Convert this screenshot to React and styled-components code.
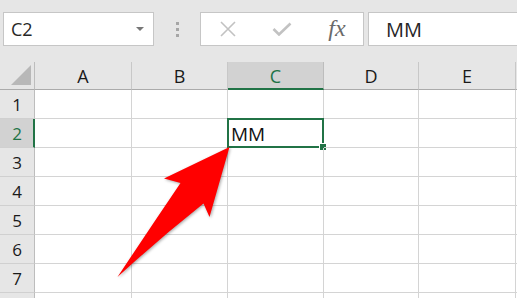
import React from "react";
import styled, { createGlobalStyle } from "styled-components";

const Global = createGlobalStyle`
  html, body { margin: 0; padding: 0; background: #fff; }
  body { width: 517px; height: 298px; overflow: hidden; font-family: "Open Sans", "Noto Sans", sans-serif; }
`;

const Page = styled.div`
  position: relative;
  width: 517px;
  height: 298px;
  overflow: hidden;
  background: #fff;
`;

const Toolbar = styled.div`
  height: 62px;
  box-sizing: border-box;
  background: #e6e6e6;
  display: flex;
  align-items: flex-start;
  padding: 12px 0 0 3px;
`;

const Box = styled.div`
  height: 34px;
  box-sizing: border-box;
  background: #fff;
  border: 1px solid #c6c6c6;
  display: flex;
  align-items: center;
`;

const NameBox = styled(Box)`
  width: 151px;
  padding: 0 0 0 7px;
  justify-content: space-between;
  font-size: 18px;
  color: #262626;
`;

const Caret = styled.span`
  width: 0;
  height: 0;
  border-left: 4px solid transparent;
  border-right: 4px solid transparent;
  border-top: 4px solid #777;
  margin-right: 9px;
`;

const Dots = styled.div`
  width: 46px;
  height: 34px;
  display: flex;
  flex-direction: column;
  align-items: center;
  justify-content: center;
  gap: 3px;
  span {
    width: 3px;
    height: 3px;
    background: #a6a6a6;
  }
`;

const Buttons = styled(Box)`
  width: 164px;
  justify-content: flex-start;
`;

const IconCell = styled.div`
  width: ${p => p.w}px;
  display: flex;
  justify-content: center;
  align-items: center;
`;

const Fx = styled.span`
  font-family: "Liberation Serif", "DejaVu Serif", serif;
  font-style: italic;
  font-size: 24px;
  line-height: 1;
  color: #6a6a6a;
  margin-top: -2px;
  margin-left: 2px;
`;

const FormulaInput = styled(Box)`
  flex: 1;
  margin-left: 4px;
  border-right: none;
  padding-left: 17px;
  font-size: 20px;
  color: #262626;
`;

const Grid = styled.div`
  display: grid;
  grid-template-columns: 35px 97px 96px 96px 95px 97px 1fr;
  grid-auto-rows: 29px;
  grid-template-rows: 28px;
`;

const Corner = styled.div`
  background: #e6e6e6;
  border-right: 1px solid #bdbdbd;
  border-bottom: 1px solid #ababab;
  box-sizing: border-box;
  position: relative;
  svg { position: absolute; right: 3px; bottom: 4px; }
`;

const ColHead = styled.div`
  box-sizing: border-box;
  background: ${p => (p.sel ? "#d2d2d2" : "#e6e6e6")};
  border-right: 1px solid ${p => (p.sel ? "#bdbdbd" : "#c8c8c8")};
  border-bottom: ${p => (p.sel ? "2px solid #217346" : "1px solid #ababab")};
  color: ${p => (p.sel ? "#217346" : "#1a1a1a")};
  display: flex;
  align-items: center;
  justify-content: center;
  font-size: 18px;
  padding-top: ${p => (p.sel ? "1px" : "0")};
`;

const RowHead = styled.div`
  box-sizing: border-box;
  background: ${p => (p.sel ? "#d2d2d2" : "#e6e6e6")};
  border-right: ${p => (p.sel ? "2px solid #217346" : "1px solid #bdbdbd")};
  border-bottom: 1px solid #d0d0d0;
  color: ${p => (p.sel ? "#217346" : "#1a1a1a")};
  display: flex;
  align-items: center;
  justify-content: center;
  font-size: 17px;
  padding-left: ${p => (p.sel ? "1px" : "0")};
`;

const Cell = styled.div`
  box-sizing: border-box;
  border-right: 1px solid #d4d4d4;
  border-bottom: 1px solid #d4d4d4;
  position: relative;
  font-size: 19px;
  color: #111;
  display: flex;
  align-items: center;
  padding-left: 3px;
  padding-top: 2px;
`;

const Selection = styled.div`
  position: absolute;
  left: -1px;
  top: -1px;
  right: -1px;
  bottom: -1px;
  border: 2px solid #217346;
  pointer-events: none;
`;

const Handle = styled.div`
  position: absolute;
  right: -4px;
  bottom: -4px;
  width: 6px;
  height: 6px;
  background: #217346;
  border: 1px solid #fff;
`;

const ArrowLayer = styled.svg`
  position: absolute;
  left: 0;
  top: 0;
  pointer-events: none;
  filter: drop-shadow(1px 1px 1.5px rgba(0,0,0,0.35));
`;

const cols = ["A", "B", "C", "D", "E", ""];

export default function App() {
  const rows = [1, 2, 3, 4, 5, 6, 7, ""];
  return (
    <Page>
      <Global />
      <Toolbar>
        <NameBox>
          C2
          <Caret />
        </NameBox>
        <Dots>
          <span />
          <span />
          <span />
        </Dots>
        <Buttons>
          <IconCell w={54}>
            <svg width="18" height="16" viewBox="0 0 18 16">
              <path d="M2 1 L16 15 M16 1 L2 15" stroke="#c2c2c2" strokeWidth="1.6" fill="none" />
            </svg>
          </IconCell>
          <IconCell w={54}>
            <svg width="20" height="14" viewBox="0 0 20 14">
              <path d="M1.5 7 L7 12.5 L18.5 1.5" stroke="#c2c2c2" strokeWidth="2.6" fill="none" />
            </svg>
          </IconCell>
          <IconCell w={54}>
            <Fx>fx</Fx>
          </IconCell>
        </Buttons>
        <FormulaInput>MM</FormulaInput>
      </Toolbar>
      <Grid>
        <Corner>
          <svg width="20" height="20" viewBox="0 0 20 20">
            <polygon points="20,0 20,20 0,20" fill="#b8b8b8" />
          </svg>
        </Corner>
        {cols.map((c, i) => (
          <ColHead key={i} sel={c === "C"}>{c}</ColHead>
        ))}
        {rows.map((r, ri) => (
          <React.Fragment key={ri}>
            <RowHead sel={r === 2}>{r}</RowHead>
            {cols.map((c, i) => (
              <Cell key={i}>
                {r === 2 && c === "C" && (
                  <>
                    MM
                    <Selection />
                    <Handle />
                  </>
                )}
              </Cell>
            ))}
          </React.Fragment>
        ))}
      </Grid>
      <ArrowLayer width="517" height="298" viewBox="0 0 517 298">
        <path
          d="M229.5 147 L164 178.5 L180.5 183 Q150 228 117.5 277 Q160 238 203.5 203.5 L209.5 217 Z"
          fill="#ff0000"
        />
      </ArrowLayer>
    </Page>
  );
}
